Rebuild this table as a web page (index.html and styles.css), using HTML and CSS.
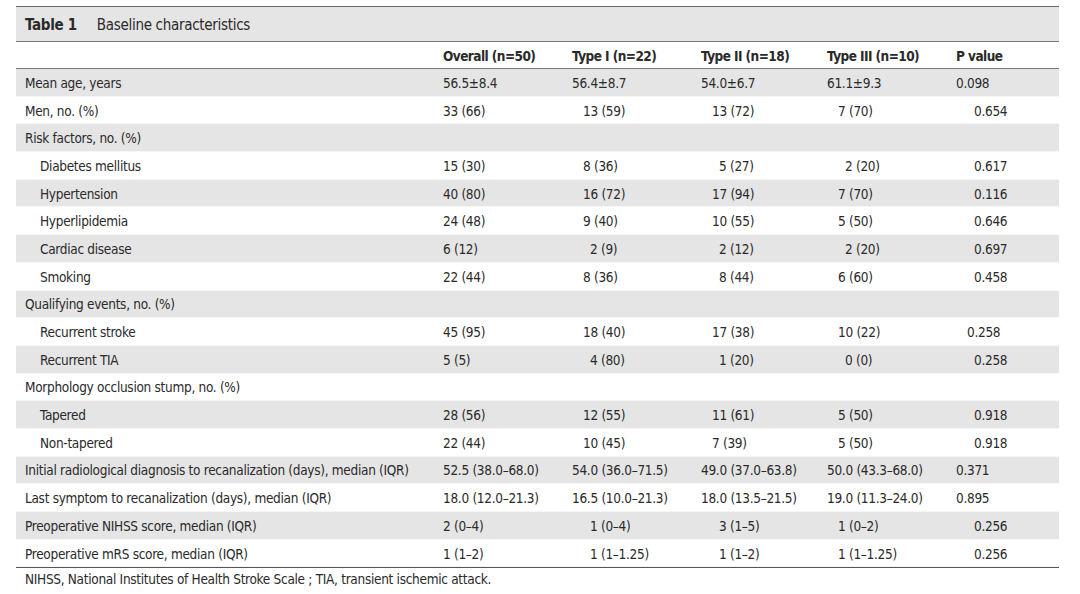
FILE: index.html
```html
<!DOCTYPE html>
<html lang="en">
<head>
<meta charset="utf-8">
<title>Table 1 Baseline characteristics</title>
<link rel="stylesheet" href="styles.css">
</head>
<body>
<div class="table">
  <div class="caption"><span class="tnum">Table 1</span><span class="ttitle">Baseline characteristics</span></div>
  <div class="row head">
    <div class="lab"></div><div>Overall (n=50)</div><div>Type I (n=22)</div><div>Type II (n=18)</div><div>Type III (n=10)</div><div>P value</div>
  </div>
  <div class="body">
    <div class="row"><div class="lab">Mean age, years</div><div>56.5±8.4</div><div>56.4±8.7</div><div>54.0±6.7</div><div>61.1±9.3</div><div>0.098</div></div>
    <div class="row"><div class="lab">Men, no. (%)</div><div>33 (66)</div><div class="o1">13 (59)</div><div class="o1">13 (72)</div><div class="o1">7 (70)</div><div class="o2">0.654</div></div>
    <div class="row"><div class="lab">Risk factors, no. (%)</div><div></div><div></div><div></div><div></div><div></div></div>
    <div class="row"><div class="lab ind">Diabetes mellitus</div><div>15 (30)</div><div class="o1">8 (36)</div><div class="o2">5 (27)</div><div class="o2">2 (20)</div><div class="o2">0.617</div></div>
    <div class="row"><div class="lab ind">Hypertension</div><div>40 (80)</div><div class="o1">16 (72)</div><div class="o1">17 (94)</div><div class="o1">7 (70)</div><div class="o2">0.116</div></div>
    <div class="row"><div class="lab ind">Hyperlipidemia</div><div>24 (48)</div><div class="o1">9 (40)</div><div class="o1">10 (55)</div><div class="o1">5 (50)</div><div class="o2">0.646</div></div>
    <div class="row"><div class="lab ind">Cardiac disease</div><div>6 (12)</div><div class="o2">2 (9)</div><div class="o2">2 (12)</div><div class="o2">2 (20)</div><div class="o2">0.697</div></div>
    <div class="row"><div class="lab ind">Smoking</div><div>22 (44)</div><div class="o1">8 (36)</div><div class="o2">8 (44)</div><div class="o1">6 (60)</div><div class="o2">0.458</div></div>
    <div class="row"><div class="lab">Qualifying events, no. (%)</div><div></div><div></div><div></div><div></div><div></div></div>
    <div class="row"><div class="lab ind">Recurrent stroke</div><div>45 (95)</div><div class="o1">18 (40)</div><div class="o1">17 (38)</div><div class="o1">10 (22)</div><div class="o1">0.258</div></div>
    <div class="row"><div class="lab ind">Recurrent TIA</div><div>5 (5)</div><div class="o2">4 (80)</div><div class="o2">1 (20)</div><div class="o2">0 (0)</div><div class="o2">0.258</div></div>
    <div class="row"><div class="lab">Morphology occlusion stump, no. (%)</div><div></div><div></div><div></div><div></div><div></div></div>
    <div class="row"><div class="lab ind">Tapered</div><div>28 (56)</div><div class="o1">12 (55)</div><div class="o1">11 (61)</div><div class="o1">5 (50)</div><div class="o2">0.918</div></div>
    <div class="row"><div class="lab ind">Non-tapered</div><div>22 (44)</div><div class="o1">10 (45)</div><div class="o1">7 (39)</div><div class="o1">5 (50)</div><div class="o2">0.918</div></div>
    <div class="row"><div class="lab">Initial radiological diagnosis to recanalization (days), median (IQR)</div><div>52.5 (38.0–68.0)</div><div>54.0 (36.0–71.5)</div><div>49.0 (37.0–63.8)</div><div>50.0 (43.3–68.0)</div><div>0.371</div></div>
    <div class="row"><div class="lab">Last symptom to recanalization (days), median (IQR)</div><div>18.0 (12.0–21.3)</div><div>16.5 (10.0–21.3)</div><div>18.0 (13.5–21.5)</div><div>19.0 (11.3–24.0)</div><div>0.895</div></div>
    <div class="row"><div class="lab">Preoperative NIHSS score, median (IQR)</div><div>2 (0–4)</div><div class="o2">1 (0–4)</div><div class="o2">3 (1–5)</div><div class="o1">1 (0–2)</div><div class="o2">0.256</div></div>
    <div class="row"><div class="lab">Preoperative mRS score, median (IQR)</div><div>1 (1–2)</div><div class="o2">1 (1–1.25)</div><div class="o2">1 (1–2)</div><div class="o1">1 (1–1.25)</div><div class="o2">0.256</div></div>
  </div>
  <div class="note">NIHSS, National Institutes of Health Stroke Scale ; TIA, transient ischemic attack.</div>
</div>
</body>
</html>
```
FILE: styles.css
```css
html, body {
  margin: 0;
  padding: 0;
  background: #ffffff;
}
body {
  font-family: "DejaVu Sans Condensed", "Liberation Sans Narrow", "Open Sans", sans-serif;
  color: #2a2a2a;
  font-size: 13.5px;
  letter-spacing: -0.3px;
}
.table {
  margin: 6px 0 0 16px;
  width: 1043px;
}
.caption {
  border-top: 1.5px solid #6a6a6a;
  border-bottom: 1.5px solid #7a7a7a;
  background: #e5e5e5;
  height: 33px;
  display: flex;
  align-items: center;
  padding-left: 9px;
  padding-top: 2px;
  box-sizing: border-box;
  height: 36px;
  font-size: 15px;
}
.tnum {
  font-weight: bold;
  margin-right: 20px;
}
.row {
  display: grid;
  grid-template-columns: 427px 129px 129px 126px 129px 103px;
  align-items: center;
  white-space: nowrap;
}
.head {
  height: 27px;
  padding-top: 2px;
  box-sizing: border-box;
  font-weight: bold;
  letter-spacing: -0.55px;
  border-bottom: 1.5px solid #7a7a7a;
}
.body {
  border-bottom: 1.5px solid #555555;
}
.body .row {
  height: 27.7px;
  box-sizing: border-box;
  padding-top: 1px;
  border-bottom: 1px solid #f6f6f6;
}
.body .row:nth-child(odd) {
  background: #e5e5e5;
}
.lab {
  padding-left: 9px;
}
.lab.ind {
  padding-left: 24px;
}
.o1 {
  padding-left: 11px;
}
.o2 {
  padding-left: 18px;
}
.note {
  padding: 3px 0 0 9px;
}
```
